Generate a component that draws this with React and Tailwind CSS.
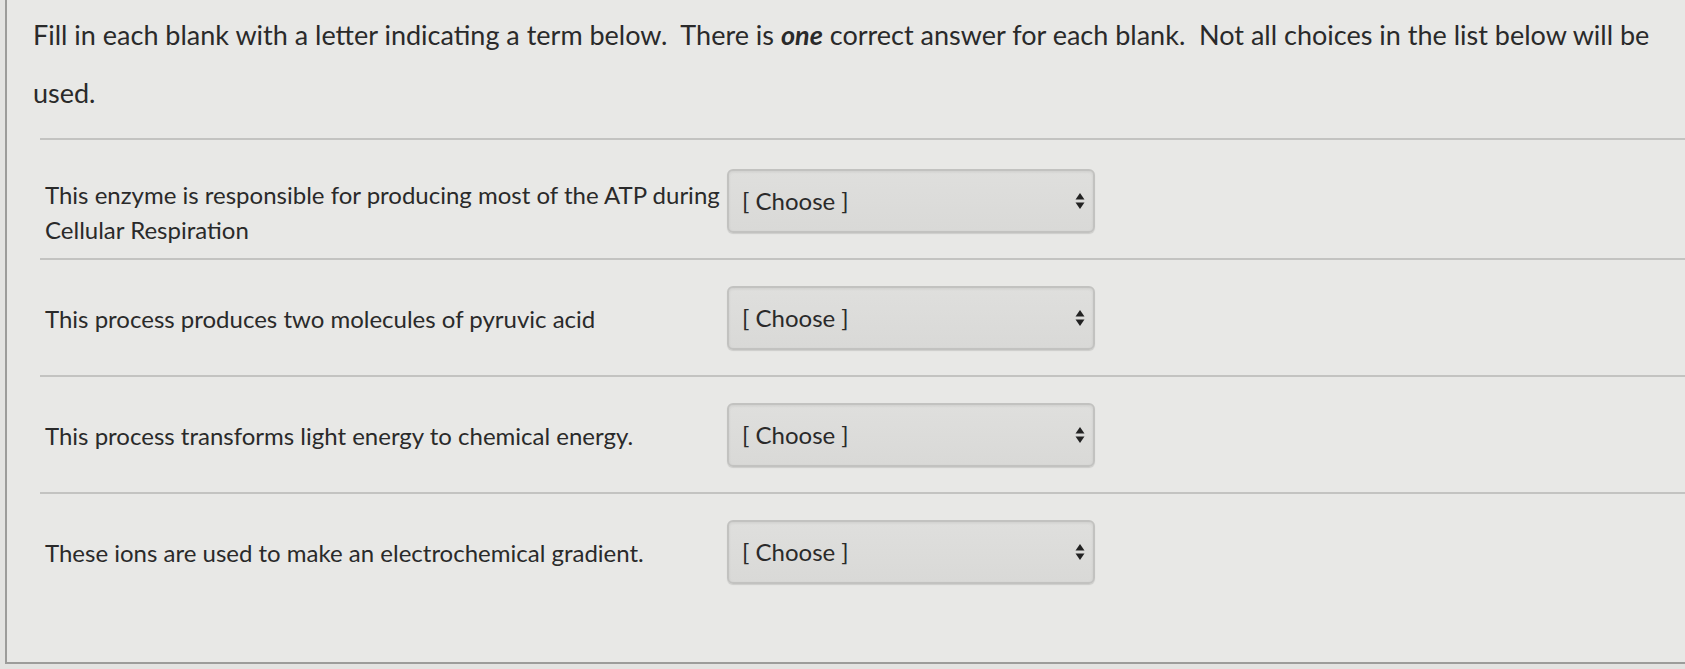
import React from "react";

const font = { fontFamily: "Lato, 'Open Sans', sans-serif" };

function Arrows() {
  return (
    <svg width="10" height="18" viewBox="0 0 10 18" className="shrink-0">
      <polygon points="5,1 9.5,7.5 0.5,7.5" fill="#222" />
      <polygon points="0.5,10.5 9.5,10.5 5,17" fill="#222" />
    </svg>
  );
}

function Select() {
  return (
    <div className="flex h-[64px] w-[368px] shrink-0 items-center justify-between rounded-[6px] border-2 border-[#c2c2c0] bg-gradient-to-b from-[#dfdfdd] to-[#d9d9d7] pl-[13px] pr-[8px] shadow-[inset_0_1px_3px_rgba(0,0,0,0.08),0_1px_1px_rgba(0,0,0,0.12)]">
      <span className="text-[24px] text-[#2a2a2a]">[ Choose ]</span>
      <Arrows />
    </div>
  );
}

function Row({ children, last, first }) {
  return (
    <div
      className={
        "ml-[33px] pb-[25px] " +
        (first ? "pt-[29px] " : "pt-[26px] ") +
        (last ? "" : "border-b-2 border-[#c3c3c1]")
      }
    >
      <div className="flex h-[64px] items-start">
        <div
          className={
            "w-[687px] shrink-0 whitespace-nowrap pl-[5px] text-[24px] leading-[35px] text-[#2a2a2a] " +
            (first ? "pt-[8px]" : "pt-[15px]")
          }
        >
          {children}
        </div>
        <Select />
      </div>
    </div>
  );
}

export default function App() {
  return (
    <div className="h-[669px] w-[1685px] overflow-hidden bg-[#e3e3e1]" style={font}>
      <div className="ml-[5px] h-[664px] border-b-2 border-l-2 border-[#9c9c9a] bg-[#e8e8e6]">
        <p className="whitespace-nowrap pl-[26px] pt-[6px] text-[27px] leading-[58px] text-[#2a2a2a]">
          Fill in each blank with a letter indicating a term below.&nbsp; There is <b className="italic">one</b> correct answer for each blank.&nbsp; Not all choices in the list below will be
          <br />
          used.
        </p>
        <div className="ml-[33px] mt-[16px] border-b-2 border-[#c3c3c1]" />
        <Row first>
          This enzyme is responsible for producing most of the ATP during
          <br />
          Cellular Respiration
        </Row>
        <Row>This process produces two molecules of pyruvic acid</Row>
        <Row>This process transforms light energy to chemical energy.</Row>
        <Row last>These ions are used to make an electrochemical gradient.</Row>
      </div>
    </div>
  );
}
